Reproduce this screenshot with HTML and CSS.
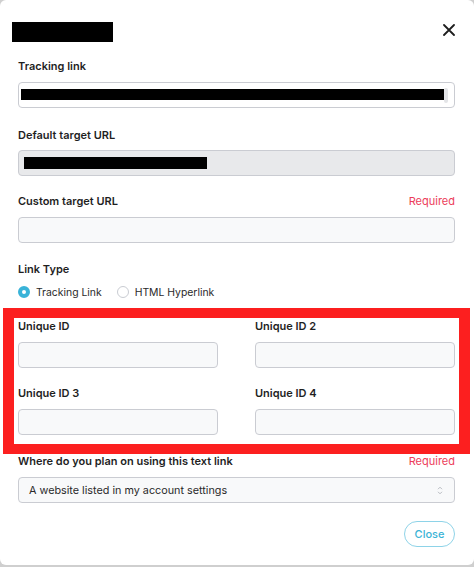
FILE: index.html
```html
<!DOCTYPE html>
<html lang="en">
<head>
<meta charset="utf-8">
<title>Text link</title>
<link rel="stylesheet" href="styles.css">
</head>
<body>
<div class="modal">
  <div class="header">
    <div class="title-redacted"></div>
    <svg class="close-x" width="12" height="12" viewBox="0 0 12 12" aria-label="Close">
      <path d="M1 1 L11 11 M11 1 L1 11" stroke="#1e1e1e" stroke-width="1.8" stroke-linecap="round" fill="none"/>
    </svg>
  </div>

  <div class="field first">
    <div class="label-row"><span class="label">Tracking link</span></div>
    <div class="input input-white">
      <div class="redact redact-long"></div>
      <div class="scrollbar"></div>
    </div>
  </div>

  <div class="field second">
    <div class="label-row short-gap"><span class="label">Default target URL</span></div>
    <div class="input input-disabled">
      <div class="redact redact-short"></div>
    </div>
  </div>

  <div class="field">
    <div class="label-row"><span class="label">Custom target URL</span><span class="required">Required</span></div>
    <div class="input"></div>
  </div>

  <div class="field linktype">
    <div class="label-row"><span class="label">Link Type</span></div>
    <div class="radios">
      <span class="radio checked"></span><span class="radio-label">Tracking Link</span>
      <span class="radio"></span><span class="radio-label">HTML Hyperlink</span>
    </div>
  </div>

  <div class="highlight">
    <div class="id-grid">
      <div class="id-field">
        <div class="label-row"><span class="label">Unique ID</span></div>
        <div class="input"></div>
      </div>
      <div class="id-field">
        <div class="label-row"><span class="label">Unique ID 2</span></div>
        <div class="input"></div>
      </div>
      <div class="id-field">
        <div class="label-row"><span class="label">Unique ID 3</span></div>
        <div class="input"></div>
      </div>
      <div class="id-field">
        <div class="label-row"><span class="label">Unique ID 4</span></div>
        <div class="input"></div>
      </div>
    </div>
  </div>

  <div class="field tight">
    <div class="label-row"><span class="label">Where do you plan on using this text link</span><span class="required">Required</span></div>
    <div class="input select">
      <span class="select-text">A website listed in my account settings</span>
      <svg class="chev" width="6" height="9" viewBox="0 0 6 9">
        <path d="M1 3.2 L3 1.2 L5 3.2 M1 5.8 L3 7.8 L5 5.8" stroke="#b9bcc2" stroke-width="1" fill="none"/>
      </svg>
    </div>
  </div>

  <div class="footer">
    <button class="close-btn">Close</button>
  </div>
</div>
</body>
</html>
```

FILE: styles.css
```css
html, body {
  margin: 0;
  padding: 0;
}
body {
  background: #cfcfcf;
  font-family: "Inter", "Noto Sans", sans-serif;
  color: #1f1f1f;
}
.modal {
  box-sizing: border-box;
  width: 474px;
  height: 565px;
  background: #ffffff;
  border-radius: 6px;
  padding: 22px 19px 0 18px;
}
.header {
  display: flex;
  justify-content: space-between;
  align-items: flex-start;
  height: 20px;
}
.title-redacted {
  width: 101px;
  height: 20px;
  background: #000;
  margin-left: -6px;
}
.close-x {
  margin-top: 2px;
  display: block;
}
.field {
  margin-top: 18px;
}
.field.first {
  margin-top: 17px;
}
.field.second {
  margin-top: 20px;
}
.field.linktype {
  margin-top: 19px;
}
.field.tight {
  margin-top: 0;
}
.label-row {
  display: flex;
  justify-content: space-between;
  height: 14px;
  line-height: 14px;
  margin-bottom: 9px;
}
.label-row.short-gap {
  margin-bottom: 8px;
}
.label {
  font-size: 11px;
  font-weight: 600;
  color: #1f1f1f;
}
.required {
  font-size: 11px;
  font-weight: 400;
  color: #ec3d5a;
}
.input {
  box-sizing: border-box;
  height: 26px;
  border: 1px solid #caccd2;
  border-radius: 4px;
  background: #f8f9fa;
  position: relative;
}
.input-white {
  background: #ffffff;
}
.input-disabled {
  background: #e8e9eb;
}
.redact {
  position: absolute;
  background: #000;
}
.redact-long {
  left: 2px;
  top: 6px;
  width: 423px;
  height: 11px;
}
.redact-short {
  left: 5px;
  top: 6px;
  width: 183px;
  height: 12px;
}
.scrollbar {
  position: absolute;
  right: 6px;
  top: 5px;
  width: 4px;
  height: 15px;
  background: #e3e4e7;
  border-radius: 2px;
}
.radios {
  display: flex;
  align-items: center;
  height: 16px;
  margin-top: -1px;
  margin-bottom: 8px;
  font-size: 10.4px;
}
.radio {
  box-sizing: border-box;
  width: 12px;
  height: 12px;
  border-radius: 50%;
  border: 1px solid #c9ccd2;
  background: #fff;
  margin-right: 6px;
}
.radio.checked {
  border: 4px solid #39b3d8;
  background: #fff;
}
.radio-label {
  color: #2a2a2a;
  margin-right: 15px;
}
.highlight {
  margin: 0 -15px 0 -15px;
  border-style: solid;
  border-color: #fc1f1f;
  border-width: 10px 11px 10px 11px;
  padding: 1px 4px 9px 4px;
}
.id-grid {
  display: grid;
  grid-template-columns: 200px 200px;
  column-gap: 37px;
  row-gap: 18px;
}
.select {
  display: flex;
  align-items: center;
  justify-content: space-between;
  padding: 0 11px 0 10px;
  background: #f8f9fa;
}
.select-text {
  font-size: 10.8px;
  color: #2a2a2a;
}
.chev {
  display: block;
}
.footer {
  display: flex;
  justify-content: flex-end;
  margin-top: 18px;
}
.close-btn {
  box-sizing: border-box;
  width: 51px;
  height: 26px;
  border: 1px solid #8ed3e8;
  border-radius: 13px;
  background: #fff;
  color: #3ab3d6;
  font-family: "Inter", "Noto Sans", sans-serif;
  font-size: 11px;
  font-weight: 500;
  padding: 0;
}
```
